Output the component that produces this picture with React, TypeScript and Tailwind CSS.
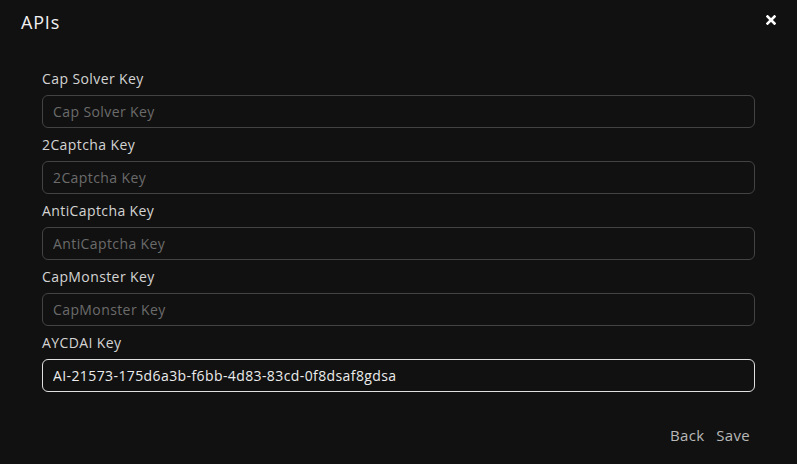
import React from 'react';

const fields = [
  { label: 'Cap Solver Key', value: '' },
  { label: '2Captcha Key', value: '' },
  { label: 'AntiCaptcha Key', value: '' },
  { label: 'CapMonster Key', value: '' },
  { label: 'AYCDAI Key', value: 'AI-21573-175d6a3b-f6bb-4d83-83cd-0f8dsaf8gdsa' },
];

const App = () => {
  return (
    <div
      className="w-[797px] h-[464px] bg-[#111111] flex flex-col text-white"
      style={{ fontFamily: '"Open Sans", sans-serif' }}
    >
      {/* header */}
      <div className="h-[45px] pl-[21px] pr-[20px] flex items-center justify-between">
        <h2 className="text-[18px] tracking-[0.8px] text-[#f2f2f2]">APIs</h2>
        <button className="w-[12px] h-[12px] flex items-center justify-center mb-[6px]">
          <svg viewBox="0 0 10 10" className="w-[10px] h-[10px]">
            <path d="M1.5 1.5 L8.5 8.5 M8.5 1.5 L1.5 8.5" stroke="#fff" strokeWidth="2.6" strokeLinecap="square" />
          </svg>
        </button>
      </div>

      {/* form */}
      <div className="px-[42px] pt-[24px] flex flex-col gap-[7px]">
        {fields.map((f) => (
          <div key={f.label} className="flex flex-col">
            <label className="text-[14px] leading-5 tracking-[0.4px] text-[#d4d4d4] mb-[6px]">{f.label}</label>
            <input
              defaultValue={f.value}
              placeholder={f.label}
              className={`h-[33px] w-full rounded-[6px] bg-transparent px-[10px] text-[14px] tracking-[0.4px] outline-none placeholder:text-[#6b6b6b] ${
                f.value ? 'border border-[#e0e0e0] text-[#ececec]' : 'border border-[#434343] text-[#ececec]'
              }`}
            />
          </div>
        ))}
      </div>

      {/* footer */}
      <div className="mt-[33px] pr-[47px] flex justify-end gap-[12px] text-[15px] leading-5 tracking-[0.3px] text-[#b8b8b8]">
        <button>Back</button>
        <button>Save</button>
      </div>
    </div>
  );
};

export default App;
